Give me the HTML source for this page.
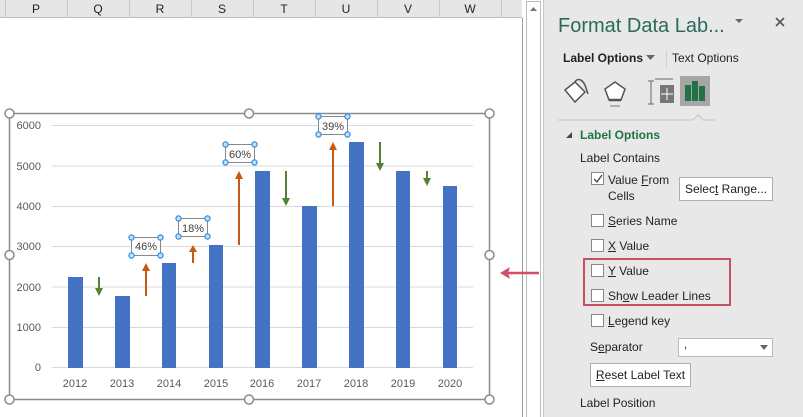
<!DOCTYPE html>
<html><head><meta charset="utf-8"><style>
*{margin:0;padding:0;box-sizing:border-box}
body{width:803px;height:417px;overflow:hidden;background:#fff;font-family:"Liberation Sans",sans-serif;position:relative}
.abs{position:absolute}
.t{position:absolute;font-size:12px;color:#222;white-space:nowrap}
.cb{position:absolute;width:13px;height:13px;border:1px solid #888;background:#fff}
.btn{position:absolute;border:1px solid #adadad;background:#fff;font-size:12px;color:#222;text-align:center}
</style></head><body>
<div class="abs" style="left:0;top:0;width:522px;height:18px;background:#e6e6e6;border-bottom:1px solid #bdbdbd"></div>
<svg class="abs" style="left:0;top:0" width="545" height="417">
<g stroke="#c8c8c8"><line x1="5.5" y1="0" x2="5.5" y2="18"/><line x1="67.5" y1="0" x2="67.5" y2="18"/><line x1="129.5" y1="0" x2="129.5" y2="18"/><line x1="191.5" y1="0" x2="191.5" y2="18"/><line x1="253.5" y1="0" x2="253.5" y2="18"/><line x1="315.5" y1="0" x2="315.5" y2="18"/><line x1="377.5" y1="0" x2="377.5" y2="18"/><line x1="439.5" y1="0" x2="439.5" y2="18"/><line x1="501.5" y1="0" x2="501.5" y2="18"/></g>
<g font-family="Liberation Sans" font-size="12" fill="#222" text-anchor="middle">
<text x="36" y="13">P</text><text x="98" y="13">Q</text><text x="160" y="13">R</text><text x="222" y="13">S</text><text x="284" y="13">T</text><text x="346" y="13">U</text><text x="408" y="13">V</text><text x="470" y="13">W</text></g>
<line x1="522.5" y1="18" x2="522.5" y2="417" stroke="#999"/>
<rect x="526.5" y="1.5" width="14" height="416" fill="#fff" stroke="#bbb"/>
<path d="M530 11 L537 11 L533.5 7 Z" fill="#777"/>
<rect x="9.5" y="113.5" width="480" height="286" fill="#fff" stroke="#8c8c8c" stroke-width="1.5"/>
<g stroke="#d9d9d9"><line x1="52" y1="125.5" x2="473" y2="125.5"/><line x1="52" y1="166" x2="473" y2="166"/><line x1="52" y1="206.5" x2="473" y2="206.5"/><line x1="52" y1="246.5" x2="473" y2="246.5"/><line x1="52" y1="287" x2="473" y2="287"/><line x1="52" y1="327.5" x2="473" y2="327.5"/><line x1="52" y1="367.5" x2="473" y2="367.5"/></g>
<g font-family="Liberation Sans" font-size="11" fill="#595959" text-anchor="end">
<text x="41" y="129">6000</text><text x="41" y="170">5000</text><text x="41" y="210">4000</text><text x="41" y="250">3000</text><text x="41" y="291">2000</text><text x="41" y="331">1000</text><text x="41" y="371">0</text></g>
<g fill="#4472c4">
<rect x="68" y="277" width="15" height="91"/><rect x="115" y="296" width="15" height="72"/><rect x="162" y="263" width="14" height="105"/><rect x="209" y="245" width="14" height="123"/><rect x="255" y="171" width="15" height="197"/><rect x="302" y="206" width="15" height="162"/><rect x="349" y="142" width="15" height="226"/><rect x="396" y="171" width="14" height="197"/><rect x="443" y="186" width="14" height="182"/></g>
<g font-family="Liberation Sans" font-size="11" fill="#595959" text-anchor="middle">
<text x="75" y="387">2012</text><text x="122" y="387">2013</text><text x="169" y="387">2014</text><text x="216" y="387">2015</text><text x="262" y="387">2016</text><text x="309" y="387">2017</text><text x="356" y="387">2018</text><text x="403" y="387">2019</text><text x="450" y="387">2020</text></g>
<g stroke-width="2">
<line x1="99" y1="277" x2="99" y2="289" stroke="#548235"/><path d="M95 288 L103 288 L99 296 Z" fill="#548235"/>
<line x1="146" y1="296" x2="146" y2="270" stroke="#c55a11"/><path d="M142 271 L150 271 L146 263 Z" fill="#c55a11"/>
<line x1="193" y1="263" x2="193" y2="251" stroke="#c55a11"/><path d="M189 252 L197 252 L193 245 Z" fill="#c55a11"/>
<line x1="239" y1="245" x2="239" y2="178" stroke="#c55a11"/><path d="M235 179 L243 179 L239 171 Z" fill="#c55a11"/>
<line x1="286" y1="171" x2="286" y2="199" stroke="#548235"/><path d="M282 198 L290 198 L286 206 Z" fill="#548235"/>
<line x1="333" y1="206" x2="333" y2="149" stroke="#c55a11"/><path d="M329 150 L337 150 L333 142 Z" fill="#c55a11"/>
<line x1="380" y1="142" x2="380" y2="164" stroke="#548235"/><path d="M376 163 L384 163 L380 171 Z" fill="#548235"/>
<line x1="427" y1="171" x2="427" y2="179" stroke="#548235"/><path d="M423 178 L431 178 L427 186 Z" fill="#548235"/>
</g>
<g font-family="Liberation Sans" font-size="11" fill="#404040" text-anchor="middle">
<rect x="131.5" y="237.5" width="29" height="18" fill="#fff" stroke="#888"/><text x="146" y="250">46%</text>
<rect x="178.5" y="218.5" width="29" height="18" fill="#fff" stroke="#888"/><text x="193" y="232">18%</text>
<rect x="225.5" y="144.5" width="29" height="18" fill="#fff" stroke="#888"/><text x="240" y="158">60%</text>
<rect x="318.5" y="116.5" width="29" height="18" fill="#fff" stroke="#888"/><text x="333" y="130">39%</text>
</g>
<g fill="#bfe0fb" stroke="#2e8fe0" stroke-width="1.2">
<circle cx="131.5" cy="237.5" r="2.6"/><circle cx="160.5" cy="237.5" r="2.6"/><circle cx="131.5" cy="255.5" r="2.6"/><circle cx="160.5" cy="255.5" r="2.6"/>
<circle cx="178.5" cy="218.5" r="2.6"/><circle cx="207.5" cy="218.5" r="2.6"/><circle cx="178.5" cy="236.5" r="2.6"/><circle cx="207.5" cy="236.5" r="2.6"/>
<circle cx="225.5" cy="144.5" r="2.6"/><circle cx="254.5" cy="144.5" r="2.6"/><circle cx="225.5" cy="162.5" r="2.6"/><circle cx="254.5" cy="162.5" r="2.6"/>
<circle cx="318.5" cy="116.5" r="2.6"/><circle cx="347.5" cy="116.5" r="2.6"/><circle cx="318.5" cy="134.5" r="2.6"/><circle cx="347.5" cy="134.5" r="2.6"/>
</g>
<g fill="#fff" stroke="#8c8c8c" stroke-width="1.5">
<circle cx="9.5" cy="113.5" r="4.5"/><circle cx="249" cy="113.5" r="4.5"/><circle cx="489.5" cy="113.5" r="4.5"/>
<circle cx="9.5" cy="255" r="4.5"/><circle cx="489.5" cy="255" r="4.5"/>
<circle cx="9.5" cy="399.5" r="4.5"/><circle cx="249" cy="399.5" r="4.5"/><circle cx="489.5" cy="399.5" r="4.5"/>
</g>
</svg>
<div class="abs" style="left:543px;top:0;width:260px;height:417px;background:#e8e8e8;border-left:1px solid #c6c6c6"></div>
<svg class="abs" style="left:495px;top:262px" width="50" height="22"><line x1="12" y1="11" x2="44" y2="11" stroke="#d0506a" stroke-width="2.5"/><path d="M5 11 L15 5 L13 11 L15 17 Z" fill="#d0506a"/></svg>
<div class="t" style="left:558px;top:15px;font-size:20px;color:#2a6a5a">Format Data Lab...</div>
<svg class="abs" style="left:735px;top:15px" width="60" height="14"><path d="M0 4 L8 4 L4 8 Z" fill="#666"/><path d="M41 3 L49 11 M49 3 L41 11" stroke="#555" stroke-width="1.6"/></svg>
<div class="t" style="left:563px;top:51px;font-weight:bold">Label Options</div>
<svg class="abs" style="left:646px;top:54px" width="10" height="8"><path d="M0 1 L9 1 L4.5 6 Z" fill="#666"/></svg>
<div class="abs" style="left:666px;top:50px;width:1px;height:18px;background:#d0d0d0"></div>
<div class="t" style="left:672px;top:51px">Text Options</div>
<svg class="abs" style="left:555px;top:74px" width="160" height="50">
<path d="M10 16 L20 8 L30 18 L20 28 Z" fill="#fff" stroke="#555" stroke-width="1.5"/><path d="M20 8 C22 4 28 4 31 14 L33 20" fill="none" stroke="#555" stroke-width="1.5"/>
<path d="M60 8 L70 15 L66 26 L54 26 L50 15 Z" fill="#fff" stroke="#555" stroke-width="1.5"/><line x1="54" y1="26" x2="66" y2="26" stroke="#555" stroke-width="2.5"/><line x1="55" y1="32" x2="65" y2="32" stroke="#777"/>
<path d="M96 7 L96 30 M93 7 L99 7 M93 30 L99 30 M100 5 L118 5" stroke="#666" fill="none"/><rect x="105" y="11" width="14" height="18" fill="#777"/><path d="M112 14 V26 M106 20 H118" stroke="#fff"/>
<rect x="125" y="2" width="30" height="30" fill="#a6a6a6"/><rect x="130" y="11" width="6" height="16" fill="#217346"/><rect x="137" y="7" width="6" height="20" fill="#217346"/><rect x="144" y="12" width="6" height="15" fill="#217346"/>
<path d="M3 46 H138 L143 41 L148 46 H238" stroke="#c6c6c6" fill="none"/>
</svg>
<svg class="abs" style="left:565px;top:131px" width="8" height="8"><path d="M1 7 L7 7 L7 1 Z" fill="#444"/></svg>
<div class="t" style="left:580px;top:128px;font-weight:bold;color:#217346">Label Options</div>
<div class="t" style="left:580px;top:151px">Label Contains</div>
<div class="cb" style="left:591px;top:172px"></div>
<svg class="abs" style="left:593px;top:174px" width="10" height="10"><path d="M1 5 L4 8 L9 1" stroke="#444" fill="none" stroke-width="1.3"/></svg>
<div class="t" style="left:608px;top:173px">Value <u>F</u>rom</div>
<div class="t" style="left:608px;top:189px">Cells</div>
<div class="btn" style="left:679px;top:177px;width:94px;height:24px;line-height:22px">Selec<u>t</u> Range...</div>
<div class="cb" style="left:591px;top:214px"></div><div class="t" style="left:608px;top:214px"><u>S</u>eries Name</div>
<div class="cb" style="left:591px;top:239px"></div><div class="t" style="left:608px;top:239px"><u>X</u> Value</div>
<div class="cb" style="left:591px;top:264px"></div><div class="t" style="left:608px;top:264px"><u>Y</u> Value</div>
<div class="cb" style="left:591px;top:289px"></div><div class="t" style="left:608px;top:289px">Sh<u>o</u>w Leader Lines</div>
<div class="abs" style="left:583px;top:258px;width:148px;height:48px;border:2px solid #c85066"></div>
<div class="cb" style="left:591px;top:314px"></div><div class="t" style="left:608px;top:314px"><u>L</u>egend key</div>
<div class="t" style="left:590px;top:340px">S<u>e</u>parator</div>
<div class="abs" style="left:678px;top:338px;width:95px;height:19px;background:#fff;border:1px solid #bbb"></div>
<div class="t" style="left:684px;top:339px;font-size:11px">,</div>
<svg class="abs" style="left:760px;top:345px" width="9" height="6"><path d="M0 0 L8 0 L4 5 Z" fill="#666"/></svg>
<div class="btn" style="left:590px;top:363px;width:101px;height:24px;line-height:22px"><u>R</u>eset Label Text</div>
<div class="t" style="left:580px;top:396px">Label Position</div>
</body></html>
